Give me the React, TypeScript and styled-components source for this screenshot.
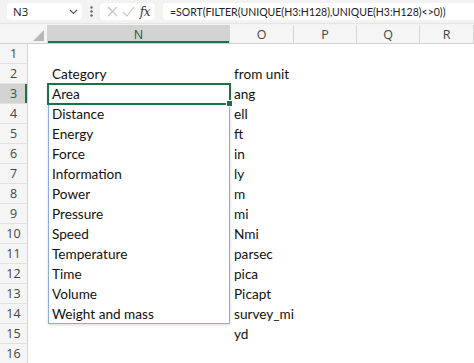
import React from 'react';
import styled, { createGlobalStyle } from 'styled-components';

const GlobalStyle = createGlobalStyle`
  html, body {
    margin: 0;
    padding: 0;
    background: #ffffff;
    overflow: hidden;
  }
  body {
    font-family: "Open Sans", "Noto Sans", sans-serif;
  }
`;

const ROW_H = 20;
const COLS = '28px 20px 182px 64px 63px 63px 1fr';

const Window = styled.div`
  width: 474px;
  height: 363px;
  overflow: hidden;
  background: #ffffff;
`;

const FormulaBar = styled.div`
  height: 24px;
  background: #f3f3f3;
  border-bottom: 1px solid #e4e4e4;
  display: flex;
  align-items: center;
  padding-left: 7px;
  box-sizing: border-box;
`;

const NameBox = styled.div`
  width: 75px;
  height: 17px;
  background: #ffffff;
  border-radius: 4px;
  display: flex;
  align-items: center;
  justify-content: space-between;
  padding: 0 4px 0 6px;
  box-sizing: border-box;
  font-size: 11.5px;
  color: #222;
`;

const Grip = styled.div`
  width: 18px;
  display: flex;
  justify-content: center;
`;

const FxBox = styled.div`
  width: 55px;
  height: 17px;
  background: #ffffff;
  border-radius: 4px;
  display: flex;
  align-items: center;
  justify-content: space-between;
  padding: 0 5px 0 7px;
  box-sizing: border-box;
`;

const Fx = styled.span`
  font-family: "DejaVu Serif", "Liberation Serif", serif;
  font-style: italic;
  font-size: 12px;
  color: #333;
  letter-spacing: -0.5px;
`;

const FormulaBox = styled.div`
  flex: 1;
  height: 17px;
  margin-left: 8px;
  background: #ffffff;
  border-radius: 4px 0 0 4px;
  display: flex;
  align-items: center;
  padding-left: 7px;
  font-family: Lato, "Open Sans", sans-serif;
  font-size: 10.5px;
  color: #222;
  white-space: nowrap;
  overflow: hidden;
`;

const Gap = styled.div`
  height: 1px;
  background: #f3f3f3;
`;

const HeaderRow = styled.div`
  display: grid;
  grid-template-columns: ${COLS};
  height: 18px;
  background: #f5f5f5;
  border-bottom: 1px solid #d0d0d0;
`;

const Corner = styled.div`
  grid-column: span 2;
  position: relative;
  border-right: 1px solid #d4d4d4;
`;

const CornerTriangle = styled.div`
  position: absolute;
  right: 3px;
  bottom: 2px;
  width: 0;
  height: 0;
  border-left: 11px solid transparent;
  border-bottom: 11px solid #b8b8b8;
`;

const ColHeader = styled.div<{ $active?: boolean }>`
  display: flex;
  align-items: center;
  justify-content: center;
  font-size: 12.5px;
  color: ${p => (p.$active ? '#1f5c3a' : '#444')};
  background: ${p => (p.$active ? '#d3d3d3' : 'transparent')};
  border-right: 1px solid #d4d4d4;
  box-shadow: ${p => (p.$active ? 'inset 0 -2px 0 #1e7145' : 'none')};
`;

const Body = styled.div`
  position: relative;
`;

const Row = styled.div`
  display: grid;
  grid-template-columns: ${COLS};
  height: ${ROW_H}px;
`;

const RowHeader = styled.div<{ $active?: boolean }>`
  display: flex;
  align-items: center;
  justify-content: center;
  font-size: 12.5px;
  color: ${p => (p.$active ? '#1f5c3a' : '#444')};
  background: ${p => (p.$active ? '#d3d3d3' : '#f5f5f5')};
  border-bottom: 1px solid #e1e1e1;
  border-right: 1px solid #d4d4d4;
  box-shadow: ${p => (p.$active ? 'inset -2px 0 0 #1e7145' : 'none')};
  box-sizing: border-box;
`;

const Cell = styled.div`
  display: flex;
  align-items: flex-end;
  padding: 0 0 2px 4px;
  box-sizing: border-box;
  font-family: Lato, "Open Sans", sans-serif;
  font-size: 13.6px;
  color: #111;
  white-space: nowrap;
  overflow: visible;
`;

const RangeBox = styled.div`
  position: absolute;
  left: 48px;
  width: 182px;
  border: 1px solid #8fa9d8;
  box-sizing: border-box;
  box-shadow: 0 1px 3px rgba(80, 110, 170, 0.25);
  pointer-events: none;
`;

const ActiveCell = styled.div`
  position: absolute;
  left: 47px;
  width: 184px;
  border: 2px solid #1e7145;
  box-sizing: border-box;
  pointer-events: none;
`;

const FillHandle = styled.div`
  position: absolute;
  right: -4px;
  bottom: -4px;
  width: 5px;
  height: 5px;
  background: #1e7145;
  border: 1px solid #ffffff;
`;

const categories = [
  'Category',
  'Area',
  'Distance',
  'Energy',
  'Force',
  'Information',
  'Power',
  'Pressure',
  'Speed',
  'Temperature',
  'Time',
  'Volume',
  'Weight and mass',
];

const units = [
  'from unit',
  'ang',
  'ell',
  'ft',
  'in',
  'ly',
  'm',
  'mi',
  'Nmi',
  'parsec',
  'pica',
  'Picapt',
  'survey_mi',
  'yd',
];

const Chevron = () => (
  <svg width="9" height="6" viewBox="0 0 9 6">
    <path d="M1 1l3.5 3.5L8 1" fill="none" stroke="#555" strokeWidth="1.2" />
  </svg>
);

const VDots = () => (
  <svg width="3" height="11" viewBox="0 0 3 11">
    <circle cx="1.5" cy="1.5" r="1.2" fill="#666" />
    <circle cx="1.5" cy="5.5" r="1.2" fill="#666" />
    <circle cx="1.5" cy="9.5" r="1.2" fill="#666" />
  </svg>
);

const Cross = () => (
  <svg width="11" height="11" viewBox="0 0 11 11">
    <path d="M1 1l9 9M10 1l-9 9" stroke="#c4c4c4" strokeWidth="1.1" />
  </svg>
);

const Check = () => (
  <svg width="13" height="11" viewBox="0 0 13 11">
    <path d="M1 6l4 4L12 1" fill="none" stroke="#c4c4c4" strokeWidth="1.1" />
  </svg>
);

const App: React.FC = () => {
  const rows = Array.from({ length: 16 }, (_, i) => i + 1);

  return (
    <Window>
      <GlobalStyle />
      <FormulaBar>
        <NameBox>
          N3
          <Chevron />
        </NameBox>
        <Grip>
          <VDots />
        </Grip>
        <FxBox>
          <Cross />
          <Check />
          <Fx>fx</Fx>
        </FxBox>
        <FormulaBox>=SORT(FILTER(UNIQUE(H3:H128),UNIQUE(H3:H128)&lt;&gt;0))</FormulaBox>
      </FormulaBar>
      <Gap />
      <HeaderRow>
        <Corner>
          <CornerTriangle />
        </Corner>
        <ColHeader $active>N</ColHeader>
        <ColHeader>O</ColHeader>
        <ColHeader>P</ColHeader>
        <ColHeader>Q</ColHeader>
        <ColHeader>R</ColHeader>
      </HeaderRow>
      <Body>
        {rows.map(r => (
          <Row key={r}>
            <RowHeader $active={r === 3}>{r}</RowHeader>
            <Cell />
            <Cell>{r >= 2 ? categories[r - 2] : ''}</Cell>
            <Cell>{r >= 2 ? units[r - 2] : ''}</Cell>
            <Cell />
            <Cell />
            <Cell />
          </Row>
        ))}
        <RangeBox style={{ top: 2 * ROW_H, height: 12 * ROW_H }} />
        <ActiveCell style={{ top: 2 * ROW_H - 1, height: ROW_H + 2 }}>
          <FillHandle />
        </ActiveCell>
      </Body>
    </Window>
  );
};

export default App;
